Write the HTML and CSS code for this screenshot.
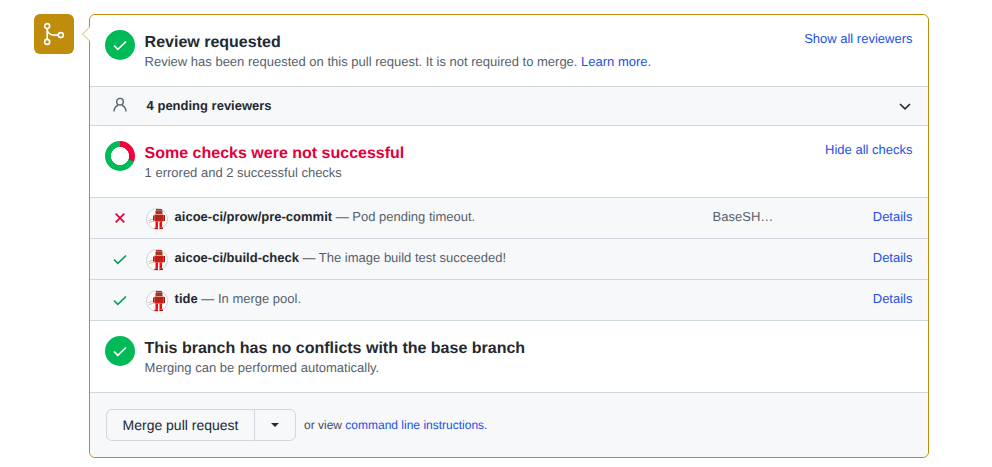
FILE: index.html
```html
<!DOCTYPE html>
<html lang="en">
<head>
<meta charset="utf-8">
<title>Merge box</title>
<link rel="stylesheet" href="styles.css">
</head>
<body>
<div class="page">
  <div class="badge">
    <svg width="26" height="26" viewBox="0 0 24 24" fill="none" stroke="#fff" stroke-width="1.500"><circle cx="5.700" cy="4.700" r="2.300"/><circle cx="5.700" cy="19.300" r="2.300"/><circle cx="18.300" cy="13" r="2.300"/><path d="M5.700 7v10M5.700 7c0 3.500 2.500 6 6 6h4.300"/></svg>
  </div>
  <div class="box">
    <span class="caret"></span>
    <section class="sec">
      <span class="status ok"><svg width="16" height="16" viewBox="0 0 16 16"><path d="M2 8.500l3.800 3.800L14 4.500" fill="none" stroke="#fff" stroke-width="1.700"/></svg></span>
      <div class="sec-text">
        <h3 class="title">Review requested</h3>
        <p class="sub">Review has been requested on this pull request. It is not required to merge. <a href="#">Learn more.</a></p>
      </div>
      <a class="side-link" href="#">Show all reviewers</a>
    </section>
    <div class="pending">
      <svg class="person" width="16" height="16" viewBox="0 0 16 16" fill="none" stroke="#57606a" stroke-width="1.400"><circle cx="8" cy="4.700" r="3.300"/><path d="M2 14.500c0-3 1.600-5.200 4-6.200M14 14.500c0-3-1.600-5.200-4-6.200"/></svg>
      <strong class="pending-text">4 pending reviewers</strong>
      <svg class="chev" width="16" height="16" viewBox="0 0 16 16" fill="none" stroke="#24292f" stroke-width="1.600"><path d="M3 6l5 4.800L13 6"/></svg>
    </div>
    <section class="sec sec-checks">
      <span class="donut"></span>
      <div class="sec-text">
        <h3 class="title fail">Some checks were not successful</h3>
        <p class="sub">1 errored and 2 successful checks</p>
      </div>
      <a class="side-link" href="#">Hide all checks</a>
    </section>
    <div class="check">
      <svg class="mark" width="16" height="16" viewBox="0 0 16 16" fill="none" stroke="#e0003c" stroke-width="1.700"><path d="M3.700 3.700l8.600 8.600M12.300 3.700l-8.600 8.600"/></svg>
      <span class="avatar"><svg width="18" height="20" viewBox="0 0 18 20"><use href="#robot"/></svg></span>
      <span class="check-text"><strong>aicoe-ci/prow/pre-commit</strong> — Pod pending timeout.</span>
      <span class="ctx">BaseSH…</span>
      <a class="details" href="#">Details</a>
    </div>
    <div class="check">
      <svg class="mark" width="16" height="16" viewBox="0 0 16 16" fill="none" stroke="#0b9d50" stroke-width="1.700"><path d="M2 8.500l3.800 3.800L14 4.500"/></svg>
      <span class="avatar"><svg width="18" height="20" viewBox="0 0 18 20"><use href="#robot"/></svg></span>
      <span class="check-text"><strong>aicoe-ci/build-check</strong> — The image build test succeeded!</span>
      <a class="details" href="#">Details</a>
    </div>
    <div class="check">
      <svg class="mark" width="16" height="16" viewBox="0 0 16 16" fill="none" stroke="#0b9d50" stroke-width="1.700"><path d="M2 8.500l3.800 3.800L14 4.500"/></svg>
      <span class="avatar"><svg width="18" height="20" viewBox="0 0 18 20"><use href="#robot"/></svg></span>
      <span class="check-text"><strong>tide</strong> — In merge pool.</span>
      <a class="details" href="#">Details</a>
    </div>
    <section class="sec sec-branch">
      <span class="status ok"><svg width="16" height="16" viewBox="0 0 16 16"><path d="M2 8.500l3.800 3.800L14 4.500" fill="none" stroke="#fff" stroke-width="1.700"/></svg></span>
      <div class="sec-text">
        <h3 class="title">This branch has no conflicts with the base branch</h3>
        <p class="sub">Merging can be performed automatically.</p>
      </div>
    </section>
    <footer class="foot">
      <div class="btn-group">
        <button class="btn btn-main" type="button">Merge pull request</button>
        <button class="btn btn-drop" type="button" aria-label="Merge options"><span class="tri"></span></button>
      </div>
      <span class="hint">or view <a href="#">command line instructions</a>.</span>
    </footer>
  </div>
</div>
<svg class="defs" width="0" height="0" aria-hidden="true">
  <symbol id="robot" viewBox="0 0 18 20">
    <path d="M.5 11.500l5-1.500M1 13.500l5-1.500" stroke="#dcb5a4" stroke-width="1.100" fill="none"/>
    <rect x="8" y="0" width="6" height="1.500" fill="#c8281c"/>
    <rect x="7.500" y="1.500" width="7" height="3.500" fill="#9c3a26"/>
    <rect x="6.500" y="5.500" width="9" height="7" fill="#dc1410"/>
    <rect x="8.500" y="7" width="5" height="3" fill="#8a3624"/>
    <rect x="5" y="6.500" width="1.500" height="5" fill="#c4140e"/>
    <rect x="15.500" y="6" width="1.500" height="6" fill="#8e1a12"/>
    <rect x="7.500" y="12.500" width="2.500" height="6" fill="#ee0f0c"/>
    <rect x="11.500" y="12.500" width="2.500" height="6" fill="#ee0f0c"/>
    <rect x="6.500" y="18.500" width="3.500" height="1.500" fill="#b50d0a"/>
    <rect x="11.500" y="18.500" width="3.500" height="1.500" fill="#b50d0a"/>
  </symbol>
</svg>
</body>
</html>
```
FILE: styles.css
```css
* { box-sizing: border-box; }
html, body { margin: 0; background: #fff; }
body { font-family: "Liberation Sans", Arial, sans-serif; color: #24292f; font-size: 13px; overflow: hidden; text-rendering: geometricPrecision; }
a { color: #2450e4; text-decoration: none; }
.defs { position: absolute; }
.page { display: flex; align-items: flex-start; padding: 14px 0 0 34px; }
.badge { width: 40px; height: 40px; flex: none; border-radius: 6px; background: #bf8c0c; display: flex; align-items: center; justify-content: center; }
.box { position: relative; width: 840px; margin-left: 15px; border: 1px solid #bf8c0c; border-radius: 6px; background: #fff; }
.caret { position: absolute; left: -6px; top: 13.500px; width: 10px; height: 10px; transform: rotate(45deg); background: #fff; border-left: 1px solid #e4cd8e; border-bottom: 1px solid #e4cd8e; }
.sec { position: relative; display: flex; align-items: flex-start; height: 72px; padding: 15px 15.500px 0 15px; border-bottom: 1px solid #d0d7de; background: #fff; border-radius: 6px 6px 0 0; }
.sec-checks, .sec-branch { border-radius: 0; }
.status { flex: none; width: 30px; height: 30px; border-radius: 50%; display: flex; align-items: center; justify-content: center; }
.ok { background: #00ba58; }
.donut { flex: none; width: 30px; height: 30px; border-radius: 50%; background: radial-gradient(circle at center, #fff 0 8.800px, transparent 9.300px), conic-gradient(#f5003f 0 31%, #00ba58 31% 100%); }
.sec-text { flex: 1; margin-left: 9.600px; }
.title { margin: 2px 0 0; font-size: 16px; line-height: 22px; font-weight: 700; }
.fail { color: #e0003c; }
.sub { margin: -2px 0 0; font-size: 13px; line-height: 20px; color: #57606a; }
.side-link { font-size: 13px; line-height: 18px; }
.pending { display: flex; align-items: center; height: 39px; padding: 0 15px 0 22px; background: #f6f8fa; border-bottom: 1px solid #d0d7de; }
.person { flex: none; margin-bottom: 2px; }
.pending-text { flex: 1; margin-left: 18.600px; margin-bottom: 2px; font-size: 13px; }
.chev { flex: none; margin-top: -1px; }
.check { display: flex; align-items: center; height: 41px; padding: 0 15.500px 0 22px; background: #f6f8fa; border-bottom: 1px solid #d0d7de; }
.mark { flex: none; }
.avatar { flex: none; width: 22px; height: 22px; margin: 1px 0 0 18px; border-radius: 50%; border: 1px solid #d0d3d8; background: #fff; display: flex; align-items: center; justify-content: center; }
.check-text { flex: none; width: 538px; margin: 0 0 3px 6.600px; color: #57606a; white-space: nowrap; }
.check-text strong { color: #24292f; }
.ctx { color: #57606a; margin-bottom: 3px; }
.details { margin: 0 0 3px auto; }
.foot { display: flex; align-items: center; height: 64px; padding: 0 16px; background: #f6f8fa; border-radius: 0 0 6px 6px; }
.btn-group { display: flex; }
.btn { height: 32px; font-family: inherit; font-size: 14px; color: #24292f; background: #f6f8fa; border: 1px solid #d0d7de; padding: 0; text-rendering: geometricPrecision; }
.btn-main { width: 149px; border-radius: 6px 0 0 6px; }
.btn-drop { width: 42px; margin-left: -1px; border-radius: 0 6px 6px 0; display: flex; align-items: center; justify-content: center; }
.tri { width: 0; height: 0; border: 4px solid transparent; border-top-color: #24292f; border-bottom: 0; }
.hint { margin-left: 8px; font-size: 12px; color: #444c56; }
```
